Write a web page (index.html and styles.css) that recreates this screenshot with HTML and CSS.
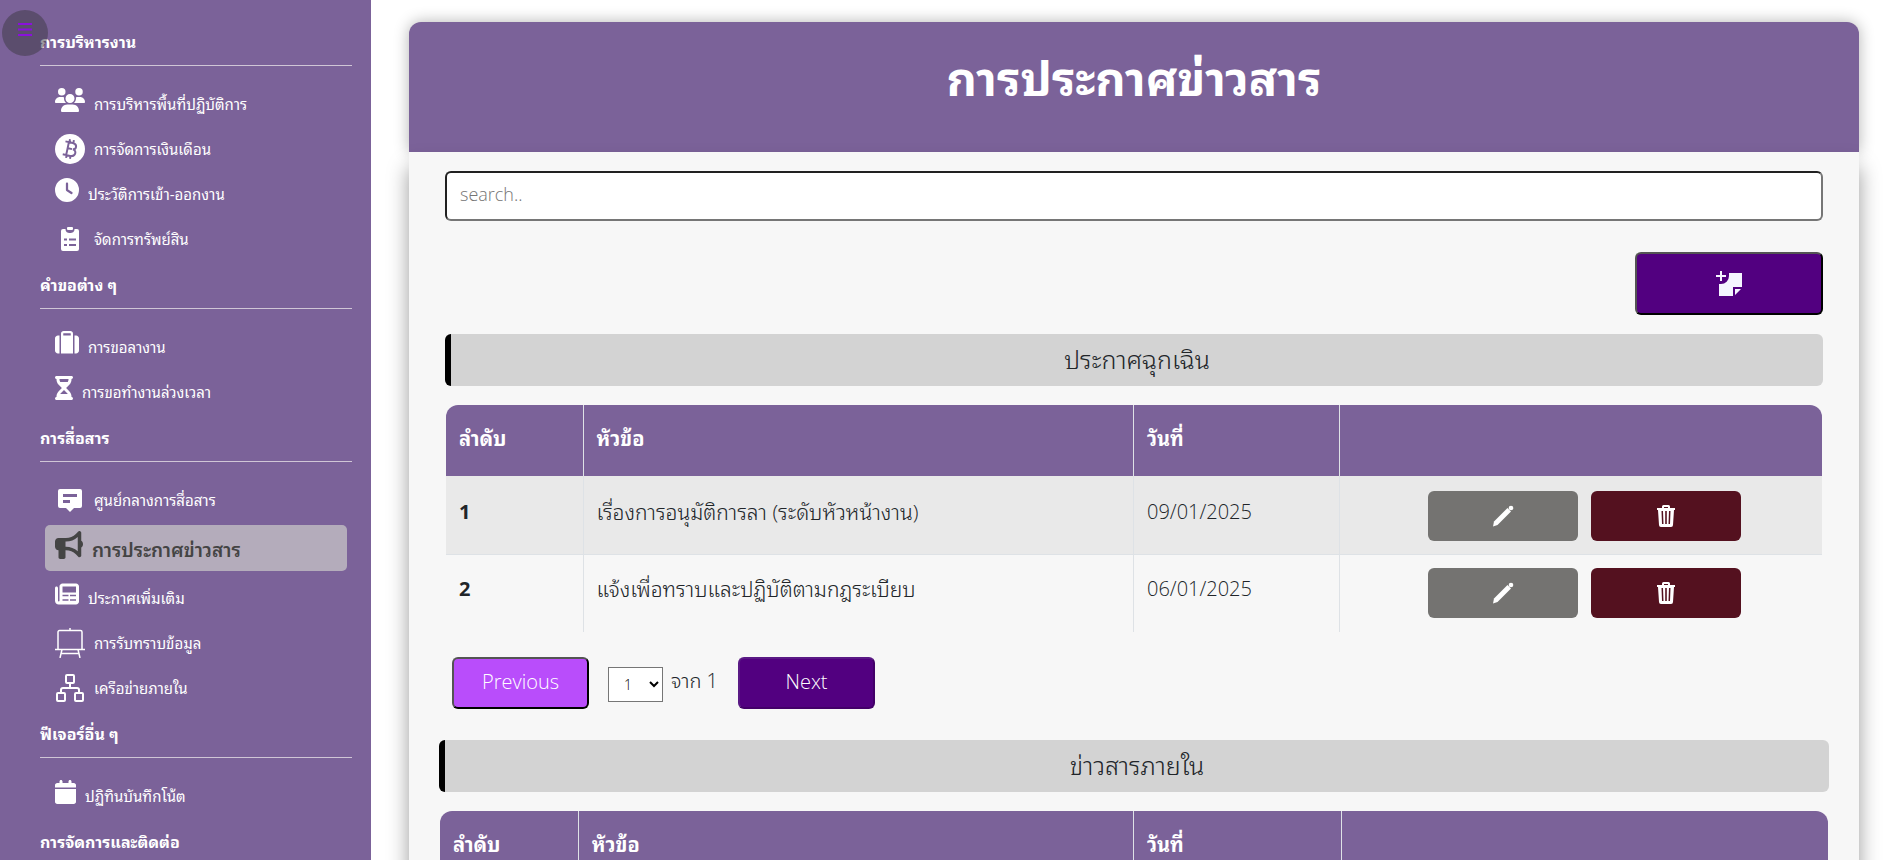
FILE: index.html
```html
<!DOCTYPE html>
<html lang="th">
	<head>
		<title>การประกาศข่าวสาร</title>
		<meta charset="UTF-8">
		<meta name="viewport" content="width=device-width, initial-scale=1.0">
		<link rel="stylesheet" href="styles.css">
	</head>
	<body>

		<button class="toggle-btn" type="button" aria-label="menu">
			<svg viewBox="0 0 14 14" width="14" height="14"><path d="M0 1h14M0 6.5h14M0 12h14" fill="none" stroke="currentColor" stroke-width="2"/></svg>
		</button>

		<!-- Sidebar -->
		<nav class="sidebar">
			<h5>การบริหารงาน</h5>
			<ul>
				<li><a href="#">
					<svg class="fa" viewBox="0 0 640 512" width="30" height="24"><path d="M144 0a80 80 0 1 1 0 160A80 80 0 1 1 144 0zM512 0a80 80 0 1 1 0 160A80 80 0 1 1 512 0zM0 298.7C0 239.8 47.8 192 106.7 192h42.7c15.9 0 31 3.5 44.6 9.7c-1.3 7.2-1.9 14.7-1.9 22.3c0 38.2 16.8 72.5 43.3 96H21.3C9.6 320 0 310.4 0 298.7zM404.6 320c26.6-23.5 43.3-57.8 43.3-96c0-7.6-.7-15-1.9-22.3c13.6-6.3 28.7-9.7 44.6-9.7h42.7C592.2 192 640 239.8 640 298.7c0 11.8-9.6 21.3-21.3 21.3zM224 224a96 96 0 1 1 192 0 96 96 0 1 1 -192 0zM128 485.3C128 411.7 187.7 352 261.3 352H378.7C452.3 352 512 411.7 512 485.3c0 14.7-11.9 26.7-26.7 26.7H154.7c-14.7 0-26.7-11.9-26.7-26.7z"/></svg>
					<span>การบริหารพื้นที่ปฏิบัติการ</span></a></li>
				<li><a href="#">
					<svg class="bi" viewBox="0 0 30 30" width="30" height="30"><circle cx="15" cy="15" r="15"/><g class="cut" transform="rotate(12 15 15)"><path d="M9 8.5h7.5c5 0 5 5.5 1.5 6.2c4.5.6 4 7-1.5 7H9M12.5 8.5v13M12 14.7h5M13 5.500v3M17 5.500v3M13 21.500v3M17 21.500v3"/></g></svg>
					<span>การจัดการเงินเดือน</span></a></li>
				<li><a href="#">
					<svg class="fa" viewBox="0 0 512 512" width="24" height="24"><path d="M256 0a256 256 0 1 1 0 512A256 256 0 1 1 256 0zM232 120V256c0 8 4 15.5 10.7 20l96 64c11 7.4 25.9 4.4 33.3-6.7s4.4-25.9-6.7-33.3L280 243.2V120c0-13.3-10.7-24-24-24s-24 10.7-24 24z"/></svg>
					<span>ประวัติการเข้า-ออกงาน</span></a></li>
				<li><a href="#">
					<svg class="bi" viewBox="0 0 30 30" width="30" height="30"><path d="M8 5h2.500c0 3 2 4 4.500 4s4.500-1 4.500-4H22a2 2 0 0 1 2 2v18a2 2 0 0 1-2 2H8a2 2 0 0 1-2-2V7a2 2 0 0 1 2-2z"/><rect x="12" y="3" width="6" height="3" rx="1"/><path class="cut" d="M9 15.500h3M14 15.500h7M9 21h3M14 21h7"/></svg>
					<span>จัดการทรัพย์สิน</span></a></li>
			</ul>

			<h5>คำขอต่าง ๆ</h5>
			<ul>
				<li><a href="#">
					<svg class="fa" viewBox="0 0 512 512" width="24" height="24"><path d="M176 56V96H336V56c0-4.4-3.6-8-8-8H184c-4.4 0-8 3.6-8 8zM128 96V56c0-30.9 25.1-56 56-56H328c30.9 0 56 25.1 56 56V480H128zM64 96H96V480H64c-35.3 0-64-28.7-64-64V160c0-35.3 28.7-64 64-64zM448 480H416V96h32c35.3 0 64 28.7 64 64V416c0 35.3-28.7 64-64 64z"/></svg>
					<span>การขอลางาน</span></a></li>
				<li><a href="#">
					<svg class="fa" viewBox="0 0 384 512" width="18" height="24"><path d="M32 0C14.3 0 0 14.3 0 32S14.3 64 32 64V75c0 42.4 16.9 83.1 46.9 113.1L146.7 256 78.9 323.9C48.9 353.9 32 394.6 32 437v11c-17.7 0-32 14.3-32 32s14.3 32 32 32H352c17.7 0 32-14.3 32-32s-14.3-32-32-32V437c0-42.4-16.9-83.1-46.9-113.1L237.3 256l67.9-67.9c30-30 46.9-70.7 46.9-113.1V64c17.7 0 32-14.3 32-32s-14.3-32-32-32H32zM96 75V64H288V75c0 19-5.6 37.4-16 53H112c-10.3-15.6-16-34-16-53zm16 309c3.5-5.3 7.6-10.3 12.1-14.9L192 301.3l67.9 67.9c4.6 4.6 8.6 9.6 12.1 14.9H112z"/></svg>
					<span>การขอทำงานล่วงเวลา</span></a></li>
			</ul>

			<h5>การสื่อสาร</h5>
			<ul>
				<li><a href="#">
					<svg class="bi" viewBox="0 0 30 30" width="30" height="30"><path d="M5 4h20a2 2 0 0 1 2 2v15a2 2 0 0 1-2 2h-6l-4 4-4-4H5a2 2 0 0 1-2-2V6a2 2 0 0 1 2-2z"/><path class="cut wide-cut" d="M8 10.500h14M8 16.500h7"/></svg>
					<span>ศูนย์กลางการสื่อสาร</span></a></li>
				<li class="active"><a href="#">
					<svg class="fa" viewBox="0 0 512 512" width="28" height="28"><path d="M480 32c0-12.9-7.8-24.6-19.8-29.6s-25.7-2.2-34.9 6.9L381.7 53c-48 48-113.1 75-181 75H64c-35.3 0-64 28.7-64 64v96c0 35.3 28.7 64 64 64l0 128c0 17.7 14.3 32 32 32h64c17.7 0 32-14.3 32-32V352l8.7 0c67.9 0 133 27 181 75l43.6 43.6c9.2 9.2 22.9 11.9 34.9 6.9s19.8-16.6 19.8-29.6V300.4c18.6-8.8 32-32.5 32-60.4s-13.4-51.6-32-60.4V32zm-64 76.7V371.3C357.2 317.8 280.5 288 200.7 288H192V192h8.7c79.8 0 156.5-29.8 215.3-83.3z"/></svg>
					<span>การประกาศข่าวสาร</span></a></li>
				<li><a href="#">
					<svg class="fa" viewBox="0 0 512 512" width="24" height="24"><path fill-rule="evenodd" d="M96 96c0-35.3 28.7-64 64-64H448c35.3 0 64 28.7 64 64V416c0 35.3-28.7 64-64 64H80c-44.2 0-80-35.8-80-80V128c0-17.7 14.3-32 32-32s32 14.3 32 32V400c0 8.8 7.2 16 16 16s16-7.2 16-16V96zM160 96v128H448V96zM160 272v32h128v-32zM320 272v32h128v-32zM160 368v32h128v-32zM320 368v32h128v-32z"/></svg>
					<span>ประกาศเพิ่มเติม</span></a></li>
				<li><a href="#">
					<svg class="bi line" viewBox="0 0 30 30" width="30" height="30"><path d="M3 21.500V4a1.500 1.500 0 0 1 1.500-1.500h21A1.500 1.500 0 0 1 27 4v17.500M0 21.500h30M15 0v2.500M7 21.500L5 30M23 21.500l2 8.500M6 25.500h18"/></svg>
					<span>การรับทราบข้อมูล</span></a></li>
				<li><a href="#">
					<svg class="bi line thick" viewBox="0 0 30 30" width="30" height="30"><rect x="11" y="2" width="8" height="8" rx="1"/><rect x="2" y="20" width="8" height="8" rx="1"/><rect x="20" y="20" width="8" height="8" rx="1"/><path d="M15 10v5M6 20v-3a2 2 0 0 1 2-2h14a2 2 0 0 1 2 2v3"/></svg>
					<span>เครือข่ายภายใน</span></a></li>
			</ul>

			<h5>ฟีเจอร์อื่น ๆ</h5>
			<ul>
				<li><a href="#">
					<svg class="fa" viewBox="0 0 448 512" width="21" height="24"><path d="M96 32V64H48C21.5 64 0 85.5 0 112v48H448V112c0-26.5-21.5-48-48-48H352V32c0-17.7-14.3-32-32-32s-32 14.3-32 32V64H160V32c0-17.7-14.3-32-32-32S96 14.3 96 32zM448 192H0V464c0 26.5 21.5 48 48 48H400c26.5 0 48-21.5 48-48V192z"/></svg>
					<span>ปฏิทินบันทึกโน้ต</span></a></li>
			</ul>

			<h5>การจัดการและติดต่อ</h5>
		</nav>

		<!-- Content -->
		<main class="main">
			<header class="card-header">
				<h1>การประกาศข่าวสาร</h1>
			</header>
			<div class="card-body">
				<input class="search" type="text" placeholder="search.." aria-label="search">
				<div class="toolbar">
					<button class="btn-add" type="button" aria-label="เพิ่มประกาศ">
						<svg viewBox="0 0 26 26" width="26" height="26"><path d="M13 2h13v14h-9v9H3V13h2a8 8 0 0 0 8-8zM19 18h6l-6 6zM4 0h2v4h4v2H6v4H4V6H0V4h4z"/></svg>
					</button>
				</div>

				<section>
					<h2 class="bar">ประกาศฉุกเฉิน</h2>
					<table class="news">
						<thead>
							<tr>
								<th class="col-no">ลำดับ</th>
								<th class="col-title">หัวข้อ</th>
								<th class="col-date">วันที่</th>
								<th></th>
							</tr>
						</thead>
						<tbody>
							<tr>
								<th>1</th>
								<td class="title">เรื่องการอนุมัติการลา (ระดับหัวหน้างาน)</td>
								<td>09/01/2025</td>
								<td class="actions">
									<div>
										<button class="btn-edit" type="button" aria-label="แก้ไข"><svg viewBox="0 0 22 22" width="22" height="22"><path d="M1 21.500l1-5L15.500 3l3.500 3.500L5.500 20z"/><circle cx="19" cy="3" r="2.300"/></svg></button>
										<button class="btn-delete" type="button" aria-label="ลบ"><svg viewBox="0 0 18 22" width="18" height="22"><path fill-rule="evenodd" d="M0 3h5V1.500A1.500 1.500 0 0 1 6.500 0h5A1.500 1.500 0 0 1 13 1.500V3h5v2h-1l-1 15a2 2 0 0 1-2 2H4a2 2 0 0 1-2-2L1 5H0zM7 2v1h4V2zM4.500 6l.5 13h1.500L6 6zM8.200 6v13h1.600V6zM12 6l-.5 13H13l.5-13z"/></svg></button>
									</div>
								</td>
							</tr>
							<tr>
								<th>2</th>
								<td class="title">แจ้งเพื่อทราบและปฏิบัติตามกฎระเบียบ</td>
								<td>06/01/2025</td>
								<td class="actions">
									<div>
										<button class="btn-edit" type="button" aria-label="แก้ไข"><svg viewBox="0 0 22 22" width="22" height="22"><path d="M1 21.500l1-5L15.500 3l3.500 3.500L5.500 20z"/><circle cx="19" cy="3" r="2.300"/></svg></button>
										<button class="btn-delete" type="button" aria-label="ลบ"><svg viewBox="0 0 18 22" width="18" height="22"><path fill-rule="evenodd" d="M0 3h5V1.500A1.500 1.500 0 0 1 6.500 0h5A1.500 1.500 0 0 1 13 1.500V3h5v2h-1l-1 15a2 2 0 0 1-2 2H4a2 2 0 0 1-2-2L1 5H0zM7 2v1h4V2zM4.500 6l.5 13h1.500L6 6zM8.200 6v13h1.600V6zM12 6l-.5 13H13l.5-13z"/></svg></button>
									</div>
								</td>
							</tr>
						</tbody>
					</table>
					<div class="pagination">
						<button class="btn-prev" type="button">Previous</button>
						<label class="page-select">
							<select>
								<option>1</option>
							</select>
							จาก 1
						</label>
						<button class="btn-next" type="button">Next</button>
					</div>
				</section>

				<section class="wide">
					<h2 class="bar">ข่าวสารภายใน</h2>
					<table class="news">
						<thead>
							<tr>
								<th class="col-no">ลำดับ</th>
								<th class="col-title">หัวข้อ</th>
								<th class="col-date">วันที่</th>
								<th></th>
							</tr>
						</thead>
					</table>
				</section>
			</div>
		</main>
	</body>
</html>
```
FILE: styles.css
```css
* {
	margin: 0;
	padding: 0;
	box-sizing: border-box;
}

body {
	display: flex;
	height: 100vh;
	overflow: hidden;
	font-family: "Open Sans", "Noto Sans Thai Looped", "Sarabun", "Loma", "Noto Sans Thai", "Noto Sans", sans-serif;
	font-size: 20px;
	font-weight: 300;
	color: #212529;
	background: #fff;
}

button,
input,
select {
	font: inherit;
}

button svg {
	fill: currentColor;
	display: block;
	margin: 0 auto;
}

/* sidebar toggle */
.toggle-btn {
	position: fixed;
	top: 10px;
	left: 2px;
	z-index: 10;
	width: 46px;
	height: 46px;
	padding-bottom: 6px;
	border: none;
	border-radius: 50%;
	background: rgba(60, 55, 65, 0.5);
	color: #8a10dc;
}

/* sidebar */
.sidebar {
	flex: none;
	width: 371px;
	height: 100%;
	padding: 17px 19px 0 40px;
	overflow-y: auto;
	scrollbar-width: none;
	background: #7b6299;
	color: #fff;
}

.sidebar h5 {
	margin: 9px 0 14px;
	padding-bottom: 6px;
	border-bottom: 1px solid #d0c6d6;
	font-size: 16px;
	font-weight: 700;
	line-height: 33px;
}

.sidebar ul {
	list-style: none;
}

.sidebar li {
	margin: 0 5px;
	padding-left: 10px;
	border-radius: 5px;
}

.sidebar a {
	display: flex;
	align-items: center;
	gap: 9px;
	height: 45px;
	color: inherit;
	font-size: 15px;
	font-weight: 400;
	text-decoration: none;
}

.sidebar svg {
	flex: none;
	fill: currentColor;
}

.sidebar .fa {
	margin-bottom: 6px;
}

.sidebar .bi {
	margin-top: 2px;
}

.sidebar .cut {
	fill: none;
	stroke: #7b6299;
	stroke-width: 2;
}

.sidebar .wide-cut {
	stroke-width: 3;
}

.sidebar .line {
	fill: none;
	stroke: currentColor;
	stroke-width: 1.5;
}

.sidebar .thick {
	stroke-width: 2;
}

.sidebar .active {
	margin: 4px 5px 3px;
	background: #b4acbb;
	color: #444;
}

.sidebar .active a {
	height: 46px;
	font-size: 19px;
	font-weight: 600;
}

/* content card */
.main {
	flex: 1;
	min-width: 0;
	height: 100%;
	padding: 22px 33px 0 38px;
	overflow-y: auto;
	scrollbar-width: none;
}

.card-header {
	height: 130px;
	padding-top: 18px;
	border-radius: 12px 12px 0 0;
	background: #7b6299;
	box-shadow: 0 0 15px rgba(0, 0, 0, 0.3);
	text-align: center;
	color: #fff;
}

.card-header h1 {
	font-size: 47px;
	font-weight: 700;
	line-height: 76px;
}

.card-body {
	min-height: 100vh;
	padding: 19px 36px;
	background: #f7f7f7;
	box-shadow: 0 15px 20px rgba(0, 0, 0, 0.4);
}

.search {
	display: block;
	width: 100%;
	height: 50px;
	padding: 0 13px 4px;
	border: 2px inset #767676;
	border-radius: 6px;
	background: #fff;
	font-size: 18px;
}

.search::placeholder {
	color: #757575;
}

.toolbar {
	display: flex;
	justify-content: flex-end;
	margin: 31px 0 19px;
}

.btn-add {
	width: 188px;
	height: 63px;
	border: 2px outset #000;
	border-radius: 6px;
	background: #520080;
	color: #f5f5ff;
}

.bar {
	height: 52px;
	border-left: 6px solid #000;
	border-radius: 6px;
	background: #d3d3d3;
	font-size: 25px;
	font-weight: 300;
	line-height: 50px;
	text-align: center;
}

.wide {
	margin: 31px -6px 0;
}

/* tables */
.news {
	width: calc(100% - 2px);
	margin: 19px 1px 0;
	border-spacing: 0;
	border-radius: 12px 12px 0 0;
	overflow: hidden;
	table-layout: fixed;
	text-align: left;
}

.news th,
.news td {
	height: 77px;
	padding: 13px 13px 0;
	border-right: 1px solid #dee2e6;
	line-height: 42px;
	vertical-align: top;
}

.news th:last-child,
.news td:last-child {
	border-right: none;
}

.news thead th {
	height: 71px;
	background: #7b6299;
	color: #fff;
}

.news tbody tr:first-child {
	background: #e9e9e9;
}

.news tbody tr:first-child > * {
	height: 79px;
	padding-top: 15px;
	border-bottom: 1px solid #dee2e6;
}

.news .title {
	font-size: 21px;
}

.news .col-no {
	width: 10%;
}

.news .col-title {
	width: 40%;
}

.news .col-date {
	width: 15%;
}

.news .actions {
	padding-right: 7px;
}

.actions div {
	display: flex;
	justify-content: center;
	gap: 13px;
}

.actions button {
	width: 150px;
	height: 50px;
	border: none;
	border-radius: 6px;
	color: #fff;
}

.btn-edit {
	background: #747371;
}

.btn-delete {
	background: #54111f;
}

/* pagination */
.pagination {
	display: flex;
	gap: 19px;
	margin: 25px 7px 0;
}

.btn-prev,
.btn-next {
	width: 137px;
	height: 52px;
	padding-bottom: 4px;
	border: 2px outset #000;
	border-radius: 6px;
	color: #fff;
}

.btn-prev {
	background: #b94dfb;
}

.btn-next {
	border: 2px solid #5a1a85;
	border-bottom-color: #430068;
	border-right-color: #430068;
	background: #520080;
}

.page-select {
	display: flex;
	gap: 8px;
	width: 111px;
	line-height: 48px;
	white-space: nowrap;
}

.page-select select {
	width: 55px;
	height: 35px;
	margin-top: 10px;
	padding-left: 11px;
	border: 1px solid #767676;
	background: #fff;
	font-size: 14px;
}
```
